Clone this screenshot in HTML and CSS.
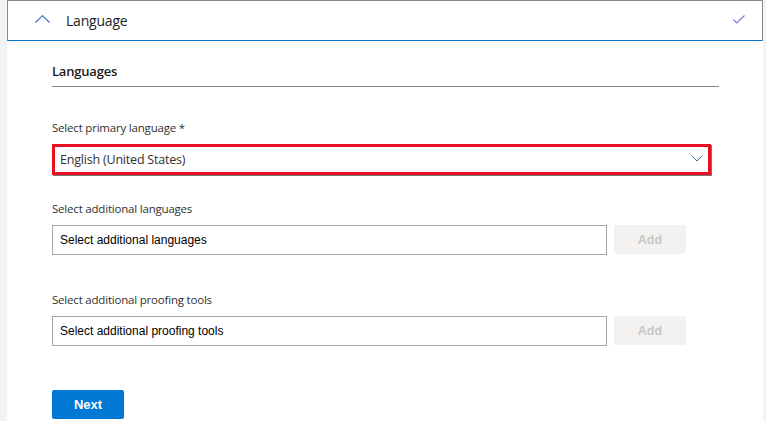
FILE: index.html
```html
<!DOCTYPE html>
<html lang="en">
<head>
<meta charset="utf-8">
<title>Language</title>
<link rel="stylesheet" href="styles.css">
</head>
<body>
<div class="card">
  <div class="card-header">
    <svg class="chev-up" width="15" height="8" viewBox="0 0 15 8"><path d="M0.5 7.5 L7.5 0.7 L14.5 7.5" fill="none" stroke="#3a64d8" stroke-width="1.1"/></svg>
    <span class="card-title">Language</span>
    <svg class="check" width="12" height="9" viewBox="0 0 12 9"><path d="M0.5 4.8 L3.8 8 L11.5 0.5" fill="none" stroke="#7c7ce8" stroke-width="1.2"/></svg>
  </div>
  <div class="card-body">
    <h2 class="section-title">Languages</h2>

    <div class="field field-primary">
      <div class="label">Select primary language *</div>
      <div class="select">
        <span class="select-value">English (United States)</span>
        <svg class="chev-down" width="12" height="7" viewBox="0 0 12 7"><path d="M0.5 0.5 L6 6 L11.5 0.5" fill="none" stroke="#4a6fb0" stroke-width="1"/></svg>
      </div>
    </div>

    <div class="field field-add1">
      <div class="label">Select additional languages</div>
      <div class="input-row">
        <div class="input">Select additional languages</div>
        <button class="btn-add">Add</button>
      </div>
    </div>

    <div class="field field-add2">
      <div class="label">Select additional proofing tools</div>
      <div class="input-row">
        <div class="input">Select additional proofing tools</div>
        <button class="btn-add">Add</button>
      </div>
    </div>

    <button class="btn-next">Next</button>
  </div>
</div>
</body>
</html>
```

FILE: styles.css
```css
html, body {
  margin: 0;
  padding: 0;
  height: 100%;
}
body {
  background: #f3f3f3;
  font-family: "Open Sans", "Noto Sans", sans-serif;
  color: #323130;
  overflow: hidden;
}
.card {
  margin-left: 7px;
  width: 756px;
  background: #ffffff;
  min-height: 100%;
}
.card-header {
  box-sizing: border-box;
  height: 41px;
  border: 1px solid #8a8a8a;
  border-bottom: 1px solid #0078d4;
  display: flex;
  align-items: center;
  padding-left: 27px;
  padding-right: 17px;
}
.chev-up {
  display: block;
  margin-top: -3px;
}
.card-title {
  margin-left: 16px;
  font-size: 14px;
  letter-spacing: -0.2px;
  color: #201f1e;
  flex: 1;
}
.check {
  display: block;
  margin-top: -2px;
}
.card-body {
  padding: 0 44px 0 45px;
}
.section-title {
  margin: 20px 0 0 0;
  font-size: 13px;
  font-weight: 600;
  line-height: 20px;
  letter-spacing: -0.2px;
  padding-bottom: 5px;
  border-bottom: 1px solid #8a8a8a;
  color: #1b1a19;
}
.label {
  font-size: 11.5px;
  line-height: 16px;
  letter-spacing: -0.2px;
  color: #323130;
  margin-bottom: 8px;
}
.field-primary {
  margin-top: 33px;
}
.select {
  box-sizing: border-box;
  width: 659px;
  height: 31px;
  border: 3px solid #e81123;
  box-shadow: 1px 1px 0 #777;
  display: flex;
  align-items: center;
  padding: 0 5px 0 5px;
}
.select-value {
  flex: 1;
  font-size: 12.5px;
  letter-spacing: -0.2px;
  color: #323130;
}
.chev-down {
  display: block;
  margin-top: -2px;
}
.field-add1 {
  margin-top: 26px;
}
.field-add2 {
  margin-top: 37px;
}
.input-row {
  display: flex;
  gap: 7px;
}
.input {
  box-sizing: border-box;
  width: 555px;
  height: 30px;
  border: 1px solid #a6a6a6;
  padding-left: 7px;
  display: flex;
  align-items: center;
  font-family: "Liberation Sans", Arial, sans-serif;
  font-size: 12px;
  color: #000;
}
.btn-add {
  box-sizing: border-box;
  width: 72px;
  height: 29px;
  border: none;
  border-radius: 2px;
  background: #f3f2f1;
  color: #c8c6c4;
  font-family: "Liberation Sans", Arial, sans-serif;
  font-weight: bold;
  font-size: 12.5px;
  padding: 0;
}
.btn-next {
  display: block;
  margin-top: 44px;
  box-sizing: border-box;
  width: 72px;
  height: 29px;
  border: none;
  border-radius: 2px;
  background: #0078d4;
  color: #ffffff;
  font-family: "Liberation Sans", Arial, sans-serif;
  font-weight: bold;
  font-size: 13px;
  padding: 0;
}
```
